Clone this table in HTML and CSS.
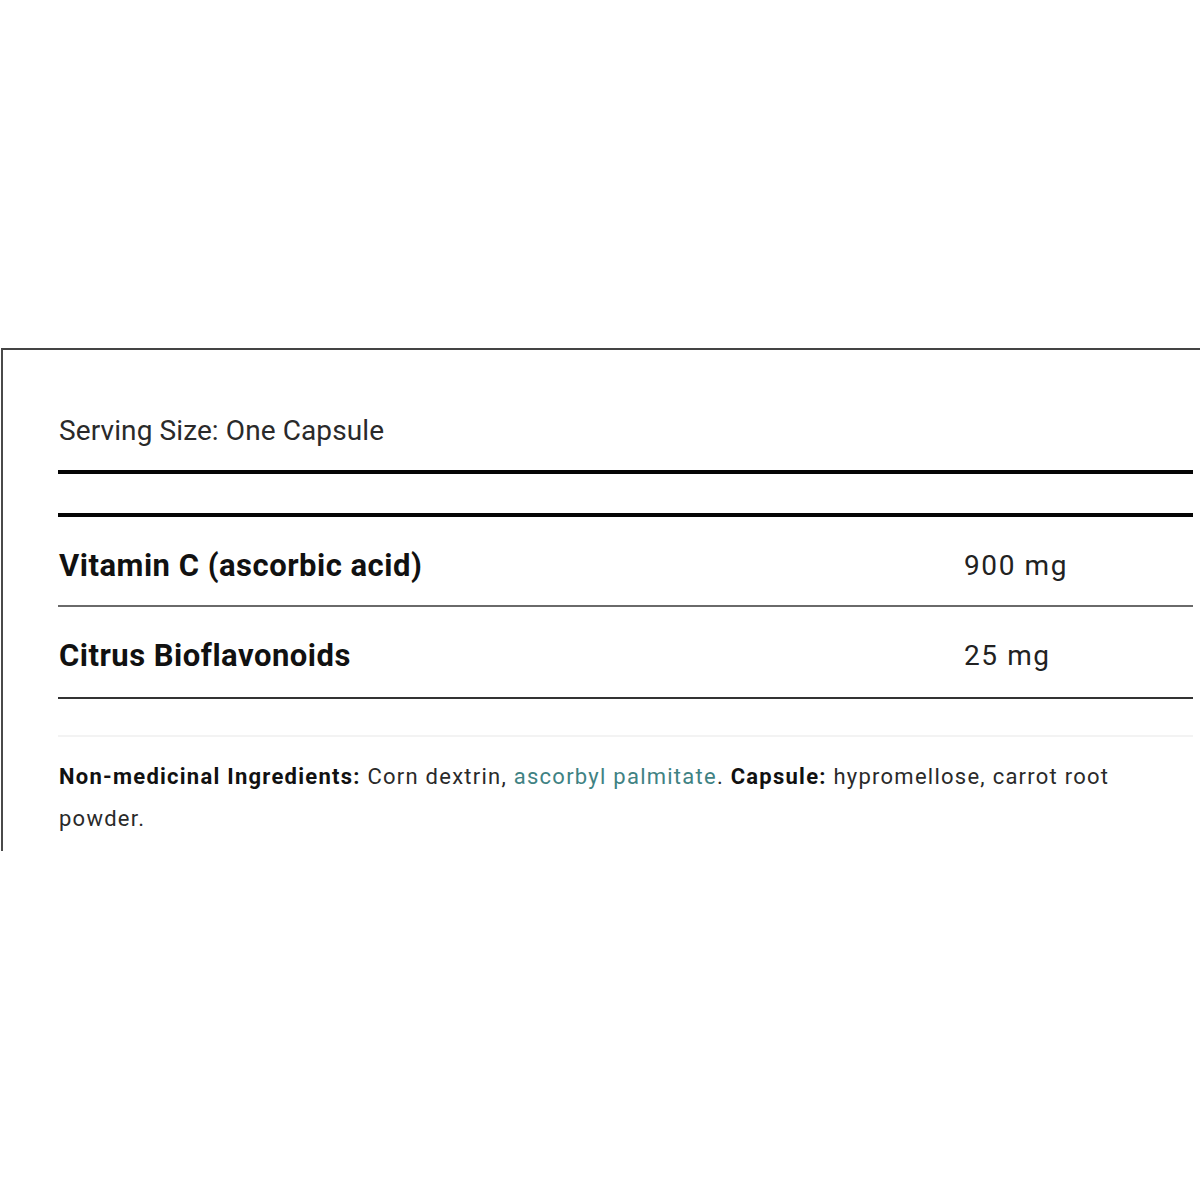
FILE: index.html
```html
<!DOCTYPE html>
<html>
<head>
<meta charset="utf-8">
<link rel="stylesheet" href="styles.css">
</head>
<body>
<div class="page">
  <div class="label">
    <div class="serving">Serving Size: One Capsule</div>
    <div class="rule-thick"></div>
    <div class="spacer"></div>
    <div class="rule-thick"></div>
    <div class="row row-first">
      <div class="name">Vitamin C (ascorbic acid)</div>
      <div class="amount">900 mg</div>
    </div>
    <div class="row row-second">
      <div class="name">Citrus Bioflavonoids</div>
      <div class="amount">25 mg</div>
    </div>
    <div class="gap"></div>
    <div class="rule-faint"></div>
    <p class="ingredients"><b>Non-medicinal Ingredients:</b> Corn dextrin, <span class="link">ascorbyl palmitate</span>. <b>Capsule:</b> hypromellose, carrot root powder.</p>
  </div>
</div>
</body>
</html>
```

FILE: styles.css
```css
html, body {
  margin: 0;
  padding: 0;
  background: #ffffff;
}
body {
  font-family: Roboto, "Liberation Sans", sans-serif;
  color: #1a1a1a;
}
.page {
  padding-top: 348px;
}
.label {
  margin-left: 1px;
  border-top: 2px solid #444444;
  border-left: 2px solid #4a4a4a;
  padding: 0 7px 11px 55px;
}
.serving {
  padding: 61px 0 19px 1px;
  font-size: 28px;
  line-height: 40px;
  letter-spacing: 0.1px;
  color: #2a2a2a;
}
.rule-thick {
  height: 4px;
  background: #050505;
}
.spacer {
  height: 39px;
}
.row {
  display: grid;
  grid-template-columns: 906px 1fr;
  line-height: 40px;
  padding-top: 29px;
}
.row-first {
  padding-bottom: 19px;
  border-bottom: 2px solid #6a6a6a;
}
.row-second {
  padding-bottom: 21px;
  border-bottom: 2px solid #333333;
}
.name {
  font-size: 31px;
  font-weight: 700;
  letter-spacing: 0.5px;
  padding-left: 1px;
  color: #111111;
}
.amount {
  font-size: 28px;
  letter-spacing: 1.6px;
  color: #222222;
}
.gap {
  height: 36px;
}
.rule-faint {
  height: 2px;
  background: #f3f3f3;
}
.ingredients {
  margin: 0;
  padding: 19px 80px 0 1px;
  font-size: 22px;
  line-height: 42px;
  letter-spacing: 1.25px;
  color: #2a2a2a;
}
.ingredients b {
  color: #111111;
}
.link {
  color: #3f8283;
}
```
